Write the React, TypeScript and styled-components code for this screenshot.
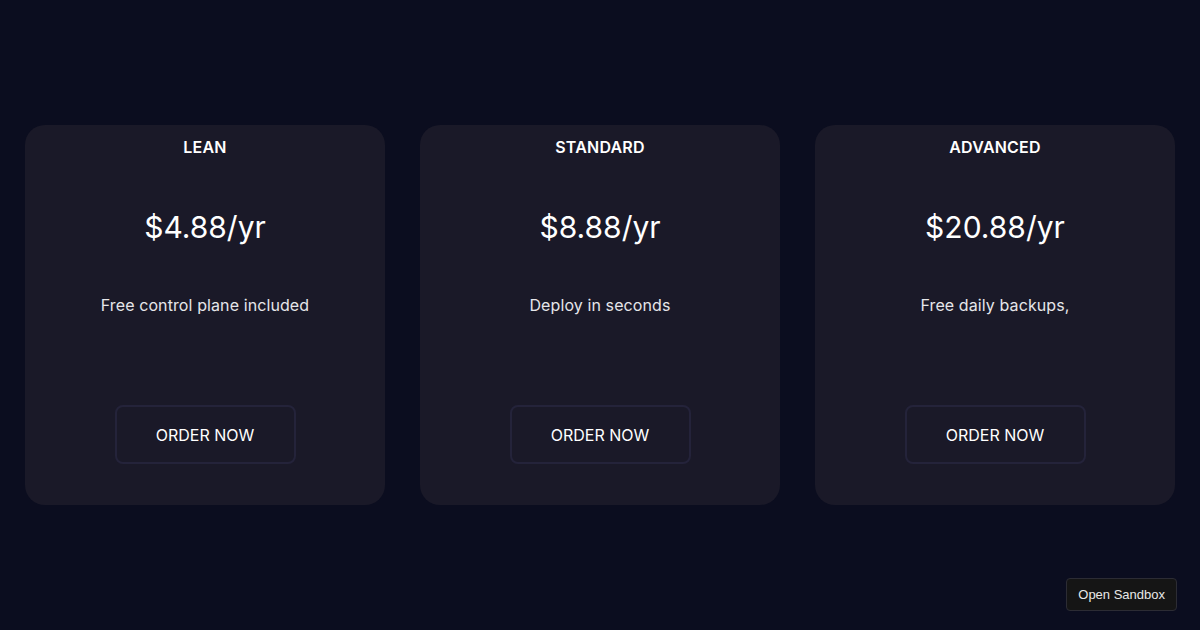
import React from "react";
import styled, { createGlobalStyle } from "styled-components";

const GlobalStyle = createGlobalStyle`
  html, body {
    margin: 0;
    padding: 0;
    background: #0b0d1f;
    font-family: Inter, "Noto Sans", sans-serif;
    color: #ffffff;
  }
`;

const plans = [
  { name: "LEAN", price: "$4.88/yr", text: "Free control plane included" },
  { name: "STANDARD", price: "$8.88/yr", text: "Deploy in seconds" },
  { name: "ADVANCED", price: "$20.88/yr", text: "Free daily backups," },
];

export default function App() {
  return (
    <>
      <GlobalStyle />
      <Page>
        <Cards>
          {plans.map((p) => (
            <Card key={p.name}>
              <Name>{p.name}</Name>
              <Price>{p.price}</Price>
              <Desc>{p.text}</Desc>
              <Order>ORDER NOW</Order>
            </Card>
          ))}
        </Cards>
        <Sandbox>Open Sandbox</Sandbox>
      </Page>
    </>
  );
}

const Page = styled.div`
  width: 1200px;
  height: 630px;
  box-sizing: border-box;
  padding: 125px 25px 0;
  position: relative;
`;

const Cards = styled.div`
  display: grid;
  grid-template-columns: repeat(3, 360px);
  gap: 35px;
`;

const Card = styled.div`
  height: 380px;
  box-sizing: border-box;
  background: #1a1928;
  border-radius: 20px;
  padding: 12px 0 41px;
  display: flex;
  flex-direction: column;
  align-items: center;
`;

const Name = styled.div`
  font-size: 16px;
  line-height: 20px;
  font-weight: 600;
  letter-spacing: 0.2px;
`;

const Price = styled.div`
  margin-top: 50px;
  font-size: 30px;
  line-height: 40px;
  font-weight: 400;
`;

const Desc = styled.div`
  margin-top: 46px;
  font-size: 16px;
  line-height: 24px;
  color: #e6e6ea;
  letter-spacing: 0.1px;
`;

const Order = styled.button`
  margin-top: auto;
  width: 181px;
  height: 59px;
  box-sizing: border-box;
  background: transparent;
  border: 2px solid #24233a;
  border-radius: 8px;
  color: #ffffff;
  font-family: Inter, "Noto Sans", sans-serif;
  font-size: 16px;
  cursor: pointer;
`;

const Sandbox = styled.button`
  position: absolute;
  right: 23px;
  bottom: 19px;
  height: 33px;
  padding: 0 11px;
  background: #151515;
  border: 1px solid #2c2c34;
  border-radius: 4px;
  color: #e8e8e8;
  font-family: "Liberation Sans", Arial, sans-serif;
  font-size: 13px;
`;
